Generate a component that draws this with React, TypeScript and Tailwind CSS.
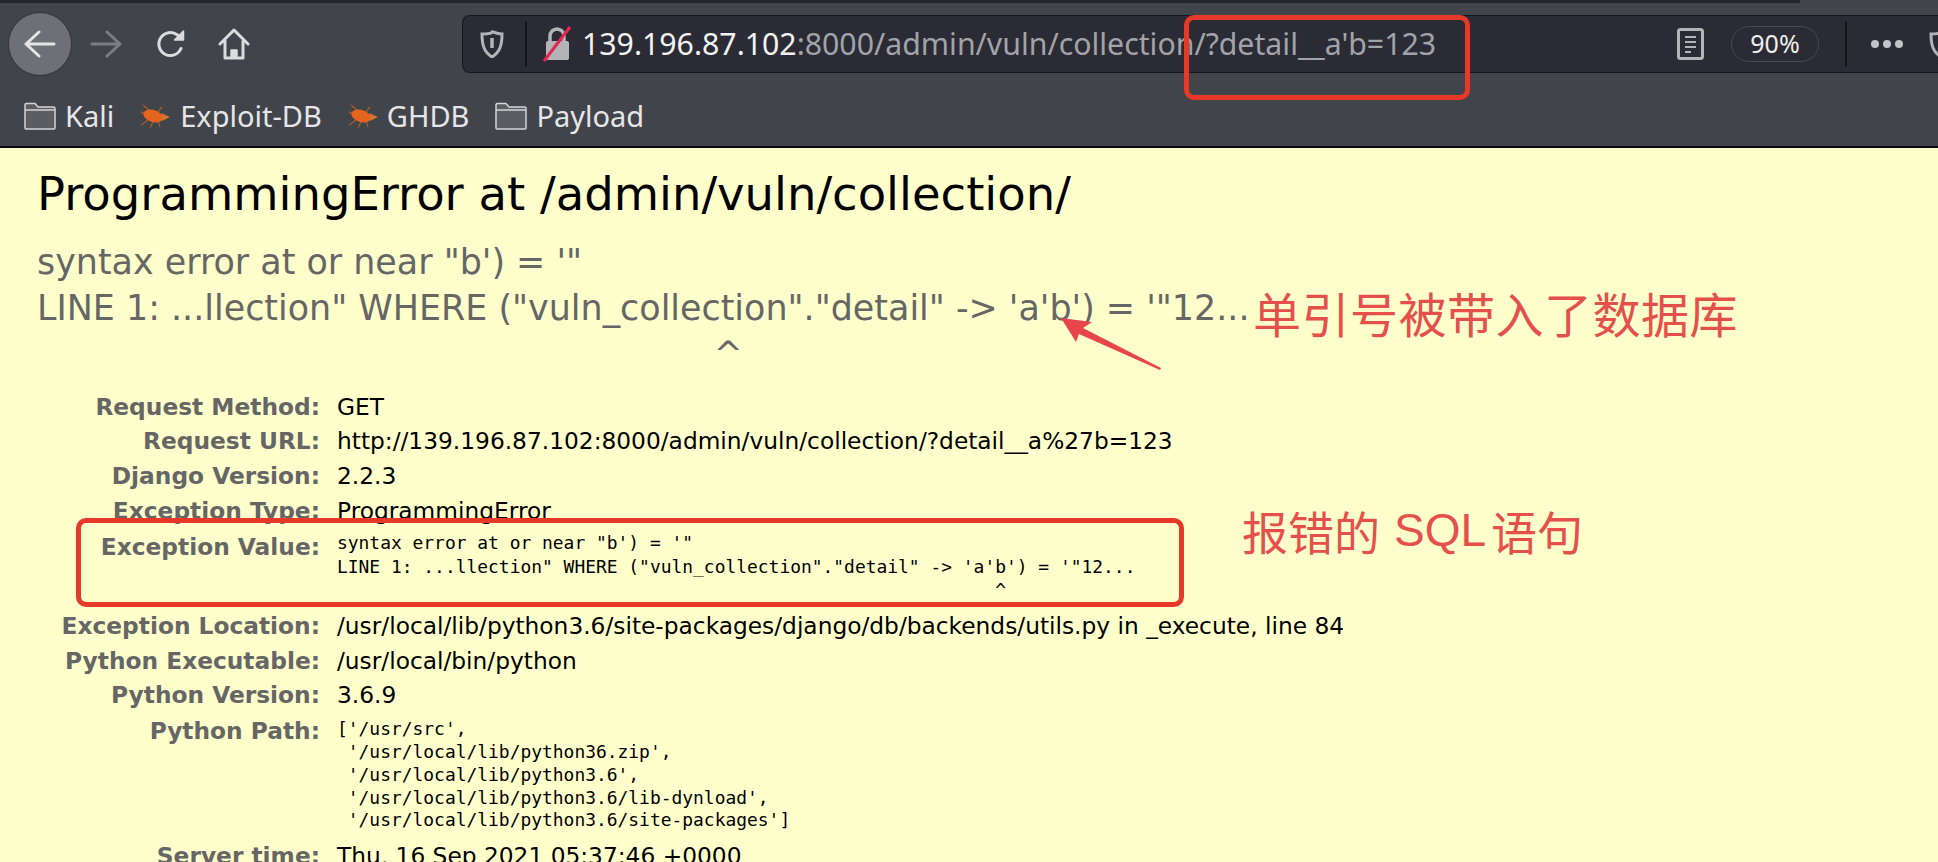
const rows = [
  { label: 'Request Method:', value: 'GET' },
  { label: 'Request URL:', value: 'http://139.196.87.102:8000/admin/vuln/collection/?detail__a%27b=123' },
  { label: 'Django Version:', value: '2.2.3' },
  { label: 'Exception Type:', value: 'ProgrammingError' },
];

const rows2 = [
  { label: 'Exception Location:', value: '/usr/local/lib/python3.6/site-packages/django/db/backends/utils.py in _execute, line 84' },
  { label: 'Python Executable:', value: '/usr/local/bin/python' },
  { label: 'Python Version:', value: '3.6.9' },
];

const pythonPath = `['/usr/src',
 '/usr/local/lib/python36.zip',
 '/usr/local/lib/python3.6',
 '/usr/local/lib/python3.6/lib-dynload',
 '/usr/local/lib/python3.6/site-packages']`;

const excMono = `syntax error at or near "b') = '"
LINE 1: ...llection" WHERE ("vuln_collection"."detail" -> 'a'b') = '"12...
${' '.repeat(61)}^`;

function Folder() {
  return (
    <svg className="block" width="32" height="28" viewBox="0 0 32 28" fill="none" stroke="#d4d4d6" strokeWidth="1.5">
      <path d="M1 26V3c0-1 .7-1.500 1.500-1.500H11l3 3.500h15.500c.9 0 1.500.6 1.500 1.500V26c0 .5-.4 1-1 1H2c-.6 0-1-.5-1-1Z" fill="#5c5d63" />
      <path d="M1 8h30" />
    </svg>
  );
}

function Bug() {
  return (
    <svg className="block" width="32" height="26" viewBox="0 0 32 26" fill="none">
      <path d="M5 2l7 6M3 9l6 3M3 22l7-5M12 25l3-6M24 4l-4 5M22 24l-2-6" stroke="#9a5a34" strokeWidth="1.500" />
      <ellipse cx="15" cy="13" rx="10" ry="6" transform="rotate(18 15 13)" fill="#e4651d" />
      <path d="M23 10l9 4-8 4z" fill="#d9702e" />
    </svg>
  );
}

function Row({ label, value }: { label: string; value: string }) {
  return (
    <div className="flex h-[34.6px] items-center">
      <div className="w-[320px] shrink-0 text-right font-bold text-[#666666]">{label}</div>
      <div className="ml-[17px] whitespace-nowrap text-black">{value}</div>
    </div>
  );
}

export default function App() {
  return (
    <div className="relative h-[862px] w-[1938px] overflow-hidden bg-[#ffffcc] font-['DejaVu_Sans',sans-serif]">
      {/* browser chrome */}
      <div className="bg-[#42444c] font-['Noto_Sans',sans-serif]">
        <div className="h-[3px] w-[1800px] bg-[#24252b]" />
        <div className="flex h-[82px] items-center">
          <div className="ml-[8px] flex h-[64px] w-[64px] items-center justify-center rounded-full border border-[#33343a] bg-[#6f7076]">
            <svg width="32" height="28" viewBox="0 0 32 28" fill="none" stroke="#e4e4e6" strokeWidth="3" strokeLinecap="round" strokeLinejoin="round">
              <path d="M2 14h28M15 2 2 14l13 12" />
            </svg>
          </div>
          <div className="ml-[18px] w-[32px]">
            <svg className="block" width="32" height="28" viewBox="0 0 32 28" fill="none" stroke="#7c7d82" strokeWidth="3" strokeLinecap="round" strokeLinejoin="round">
              <path d="M2 14h28M17 2l13 12-13 12" />
            </svg>
          </div>
          <div className="ml-[34px] w-[30px]">
            <svg className="block" width="30" height="30" viewBox="0 0 30 30" fill="none" stroke="#dcdcde" strokeWidth="3" strokeLinecap="round" strokeLinejoin="round">
              <path d="M25 19.500A11.500 11.500 0 1 1 21.500 6l4.500 3.500" />
              <path d="M27.500 2v9H18.500z" fill="#dcdcde" strokeWidth="1.500" />
            </svg>
          </div>
          <div className="ml-[32px] w-[32px]">
            <svg className="block" width="32" height="32" viewBox="0 0 32 32" fill="none" stroke="#dcdcde" strokeWidth="3" strokeLinejoin="round" strokeLinecap="round">
              <path d="M2 16 16 2l14 14M7 13v17h18V13" />
              <path d="M13 30v-8h6v8" fill="#dcdcde" strokeWidth="1.500" />
            </svg>
          </div>
          <div className="ml-[212px] flex h-[58px] min-w-0 flex-1 items-center overflow-hidden rounded-l-[8px] border border-r-0 border-[#16161b] bg-[#2a2b34]">
            <div className="ml-[17px] w-[30px] shrink-0">
              <svg className="block" width="24" height="28" viewBox="0 0 24 28" fill="none" stroke="#b4b4b8" strokeWidth="3">
                <path d="M2 4c6 0 10-1 10-2s4 2 10 2c0 11-2 18-10 23C4 22 2 15 2 4Z" />
                <path d="M12 8v10" strokeWidth="3.500" />
              </svg>
            </div>
            <div className="ml-[15px] h-[44px] w-[2px] shrink-0 bg-[#141419]" />
            <div className="ml-[15px] w-[30px] shrink-0">
              <svg className="block" width="30" height="38" viewBox="0 0 30 38" fill="none">
                <path d="M8 17v-6a7 7 0 0 1 14 0v6" stroke="#b4b4b8" strokeWidth="3.500" />
                <rect x="4" y="16" width="23" height="19" rx="2" fill="#b4b4b8" />
                <path d="M28 2 2 36" stroke="#e22850" strokeWidth="3" />
              </svg>
            </div>
            <div className="ml-[10px] w-[1062px] shrink-0 whitespace-nowrap text-[30.250px] text-[#a2a3a8]">
              <span className="text-[#f2f2f2]">139.196.87.102</span>:8000/admin/vuln/collection/?detail__a'b=123
            </div>
            <div className="ml-[33px] w-[27px] shrink-0">
              <svg className="block" width="27" height="32" viewBox="0 0 27 32" fill="none" stroke="#b4b4b8" strokeWidth="3">
                <rect x="1.500" y="1.500" width="24" height="29" rx="2" />
                <path d="M8 9h11M8 14h11M8 19h11M8 24h6" strokeWidth="2.200" />
              </svg>
            </div>
            <div className="ml-[27px] flex h-[36px] w-[88px] shrink-0 items-center justify-center rounded-full border border-[#484a52] text-[25px] text-[#eeeeee]">90%</div>
            <div className="ml-[26px] h-[44px] w-[2px] shrink-0 bg-[#141419]" />
            <div className="ml-[24px] flex w-[34px] shrink-0 gap-[4px]">
              <span className="h-[8px] w-[8px] rounded-full bg-[#c4c4c8]" />
              <span className="h-[8px] w-[8px] rounded-full bg-[#c4c4c8]" />
              <span className="h-[8px] w-[8px] rounded-full bg-[#c4c4c8]" />
            </div>
            <div className="ml-[24px] w-[26px] shrink-0">
              <svg className="block" width="24" height="28" viewBox="0 0 24 28" fill="none" stroke="#b4b4b8" strokeWidth="3">
                <path d="M2 4c6 0 10-1 10-2s4 2 10 2c0 11-2 18-10 23C4 22 2 15 2 4Z" />
              </svg>
            </div>
          </div>
        </div>
        <div className="flex h-[61px] items-center whitespace-nowrap text-[29px] text-[#e6e6e8]">
          <div className="ml-[24px]"><Folder /></div>
          <div className="ml-[9px]">Kali</div>
          <div className="ml-[24px]"><Bug /></div>
          <div className="ml-[10px]">Exploit-DB</div>
          <div className="ml-[24px]"><Bug /></div>
          <div className="ml-[9px]">GHDB</div>
          <div className="ml-[26px]"><Folder /></div>
          <div className="ml-[9px]">Payload</div>
        </div>
      </div>
      <div className="h-[2px] bg-[#0c0c10]" />

      {/* django error page */}
      <div className="pt-[20px]">
        <h1 className="ml-[37px] h-[52px] text-[46.500px] leading-[52px] whitespace-nowrap text-black">ProgrammingError at /admin/vuln/collection/</h1>
        <pre className="ml-[37px] mt-[19px] font-['DejaVu_Sans',sans-serif] text-[34.900px] leading-[46px] whitespace-pre text-[#666666]">{`syntax error at or near "b') = '"
LINE 1: ...llection" WHERE ("vuln_collection"."detail" -> 'a'b') = '"12...
${' '.repeat(61)}^`}</pre>
        <div className="mt-[13px] text-[23.300px]">
          {rows.map((r) => <Row key={r.label} {...r} />)}
          <div className="flex h-[81px] items-start">
            <div className="mt-[2px] w-[320px] shrink-0 text-right font-bold text-[#666666]">Exception Value:</div>
            <pre className="ml-[17px] mt-[3px] font-['DejaVu_Sans_Mono',monospace] text-[17.930px] leading-[23.500px] text-black">{excMono}</pre>
          </div>
          {rows2.map((r) => <Row key={r.label} {...r} />)}
          <div className="flex h-[126px] items-start">
            <div className="mt-[1px] w-[320px] shrink-0 text-right font-bold text-[#666666]">Python Path:</div>
            <pre className="ml-[17px] mt-[5px] font-['DejaVu_Sans_Mono',monospace] text-[17.930px] leading-[22.800px] text-black">{pythonPath}</pre>
          </div>
          <Row label="Server time:" value="Thu, 16 Sep 2021 05:37:46 +0000" />
        </div>
      </div>

      {/* annotations */}
      <div className="absolute top-[15px] left-[1184px] h-[85px] w-[286px] rounded-[10px] border-[5px] border-[#e73828]" />
      <div className="absolute top-[518px] left-[76px] h-[89px] w-[1108px] rounded-[10px] border-[5px] border-[#e73828]" />
      <svg className="absolute top-[310px] left-[1050px]" width="120" height="70" viewBox="0 0 120 70" fill="#e8454a">
        <path d="M11 8 42 12 33 18 111 58 110 60 29 24 26 32Z" />
      </svg>
      <div className="absolute top-[282px] left-[1253px] text-[48px] leading-[60px] tracking-[0.5px] whitespace-nowrap text-[#e5504c] font-['Noto_Sans_CJK_SC',sans-serif]">单引号被带入了数据库</div>
      <div className="absolute top-[500px] left-[1242px] flex text-[46px] leading-[60px] whitespace-nowrap text-[#e5504c] font-['Noto_Sans_CJK_SC',sans-serif]">
        <span>报错的</span>
        <span className="ml-[14px] font-['Liberation_Sans',sans-serif]">SQL</span>
        <span className="ml-[5px]">语句</span>
      </div>
    </div>
  );
}
